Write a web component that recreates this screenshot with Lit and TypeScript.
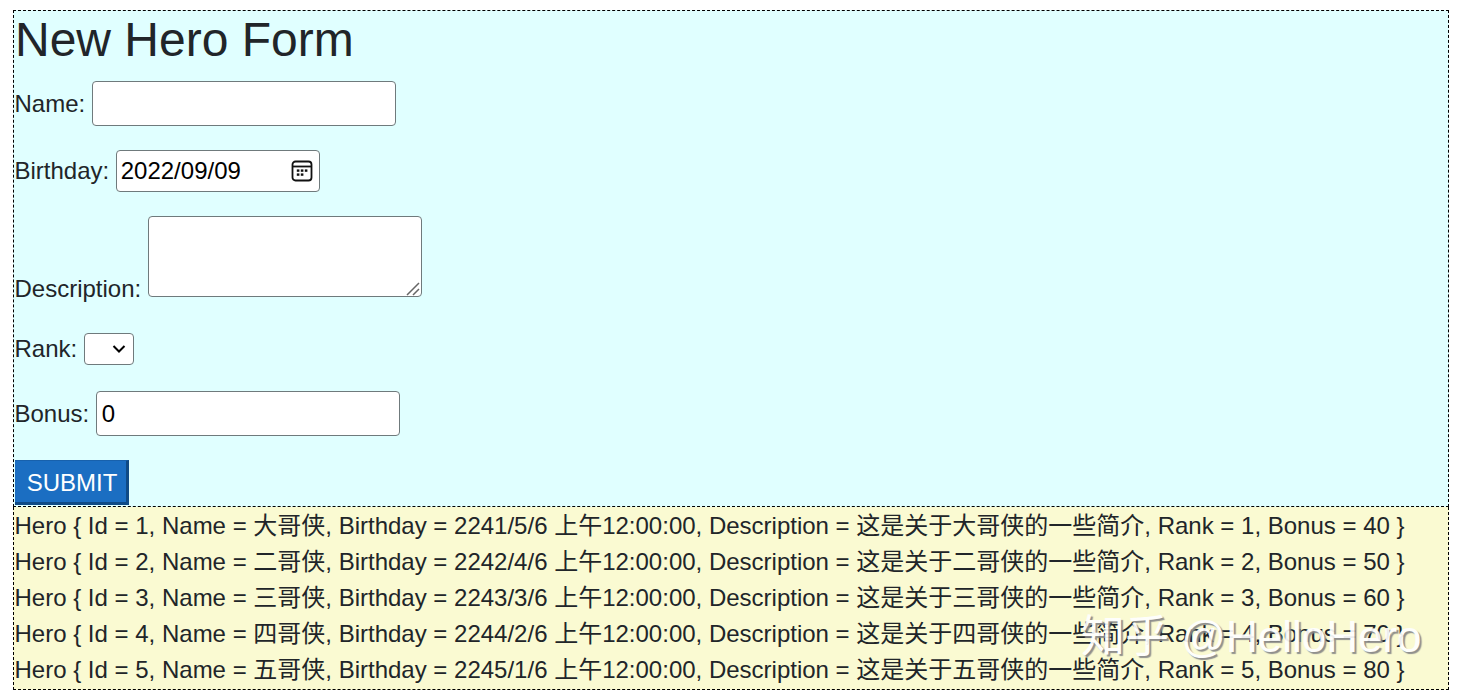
import { LitElement, html, css } from "lit";
import { customElement } from "lit/decorators.js";

const heroes = [
  [1, "大", "2241/5/6", 1, 40],
  [2, "二", "2242/4/6", 2, 50],
  [3, "三", "2243/3/6", 3, 60],
  [4, "四", "2244/2/6", 4, 70],
  [5, "五", "2245/1/6", 5, 80],
];

@customElement("app-root")
export class AppRoot extends LitElement {
  static styles = css`
    :host {
      display: block;
      position: relative;
      height: 695px;
      overflow: hidden;
      box-sizing: border-box;
      padding: 10px 11px 0 13px;
      background: #fff;
      color: #212529;
      font-family: "Liberation Sans", "Noto Sans CJK SC", sans-serif;
      font-size: 24px;
      line-height: 36px;
    }
    .form {
      border: 1px dashed #000;
      background: #e0ffff;
      padding: 0 1px;
      height: 497px;
      box-sizing: border-box;
    }
    h1 {
      margin: 0 0 12px;
      font-size: 48px;
      font-weight: 400;
      line-height: 58px;
    }
    .row {
      display: flex;
      align-items: baseline;
      gap: 6.5px;
    }
    .row label { margin-left: -0.5px; }
    .name { margin-bottom: 24px; }
    .birthday { margin-bottom: 24px; }
    .description {
      align-items: flex-end;
      margin-bottom: 34px;
    }
    .description label { margin-bottom: -10px; }
    .rank { margin-bottom: 24px; }
    .bonus { margin-bottom: 24px; }
    input,
    textarea,
    .select {
      box-sizing: border-box;
      border: 1px solid #6f7a7c;
      border-radius: 4px;
      background: #fff;
      color: #000;
      font: inherit;
      line-height: normal;
      margin: 0;
      outline: none;
    }
    input {
      width: 304px;
      height: 45px;
      padding: 1px 5px;
    }
    .date-wrap {
      position: relative;
      display: inline-flex;
    }
    .date-wrap input {
      width: 204px;
      height: 42px;
      padding: 1px 4px;
    }
    .cal {
      position: absolute;
      left: 175px;
      top: 10px;
      width: 22px;
      height: 22px;
    }
    .area-wrap {
      position: relative;
      display: inline-flex;
    }
    textarea {
      display: block;
      width: 274px;
      height: 81px;
      padding: 2px;
      resize: none;
    }
    .grip {
      position: absolute;
      right: 2px;
      bottom: 1px;
      width: 14px;
      height: 14px;
    }
    .select {
      position: relative;
      display: inline-flex;
      align-items: center;
      justify-content: flex-end;
      width: 50px;
      height: 32px;
      padding-right: 7px;
    }
    .select::before {
      content: "\\200b";
      align-self: center;
    }
    .select svg {
      width: 14px;
      height: 10px;
    }
    button {
      display: block;
      box-sizing: border-box;
      width: 114px;
      height: 45px;
      padding: 2px 0 0 3px;
      background: #1b6ec2;
      color: #fff;
      font: inherit;
      border: 0 solid #0f4a85;
      border-width: 1px 3px 3px 0;
      border-top-color: #1861ac;
    }
    .list {
      border: 1px dashed #000;
      border-top: 0;
      background: #fafad2;
      padding: 1px 1px 0 0.5px;
      height: 183px;
      box-sizing: border-box;
    }
    .hero {
      height: 36px;
      white-space: nowrap;
    }
    .mark {
      position: absolute;
      left: 1081px;
      top: 611px;
      color: #fff;
      font-size: 44px;
      line-height: 52px;
      white-space: nowrap;
      text-shadow: 2px 2px 1px #888;
      opacity: 0.92;
      pointer-events: none;
    }
  `;

  render() {
    return html`
      <div class="form">
        <h1>New Hero Form</h1>
        <div class="row name"><label>Name:</label><input type="text" /></div>
        <div class="row birthday">
          <label>Birthday:</label>
          <span class="date-wrap">
            <input type="text" value="2022/09/09" />
            <svg class="cal" viewBox="0 0 22 22" fill="none" stroke="#111" stroke-width="1.8">
              <rect x="1.5" y="1.5" width="19" height="19" rx="3"></rect>
              <path d="M1.5 6.5h19"></path>
              <g fill="#111" stroke="none">
                <rect x="5.8" y="9.4" width="2.6" height="2.4"></rect>
                <rect x="9.8" y="9.4" width="2.6" height="2.4"></rect>
                <rect x="13.8" y="9.4" width="2.6" height="2.4"></rect>
                <rect x="5.8" y="13.4" width="2.6" height="2.4"></rect>
                <rect x="9.8" y="13.4" width="2.6" height="2.4"></rect>
              </g>
            </svg>
          </span>
        </div>
        <div class="row description">
          <label>Description:</label>
          <span class="area-wrap">
            <textarea></textarea>
            <svg class="grip" viewBox="0 0 14 14" fill="none" stroke="#666" stroke-width="1.5">
              <path d="M1 13L13 1M7 13l6-6"></path>
            </svg>
          </span>
        </div>
        <div class="row rank">
          <label>Rank:</label>
          <span class="select">
            <svg viewBox="0 0 14 10" fill="none" stroke="#000" stroke-width="2">
              <path d="M1.5 2l5.5 5.5L12.5 2"></path>
            </svg>
          </span>
        </div>
        <div class="row bonus"><label>Bonus:</label><input type="text" value="0" /></div>
        <button type="button">SUBMIT</button>
      </div>
      <div class="list">
        ${heroes.map(
          ([id, n, date, rank, bonus]) => html`<div class="hero">
            Hero { Id = ${id}, Name = ${n}哥侠, Birthday = ${date} 上午12:00:00, Description = 这是关于${n}哥侠的一些简介, Rank = ${rank}, Bonus = ${bonus} }
          </div>`
        )}
      </div>
      <div class="mark">知乎 @HelloHero</div>
    `;
  }
}
